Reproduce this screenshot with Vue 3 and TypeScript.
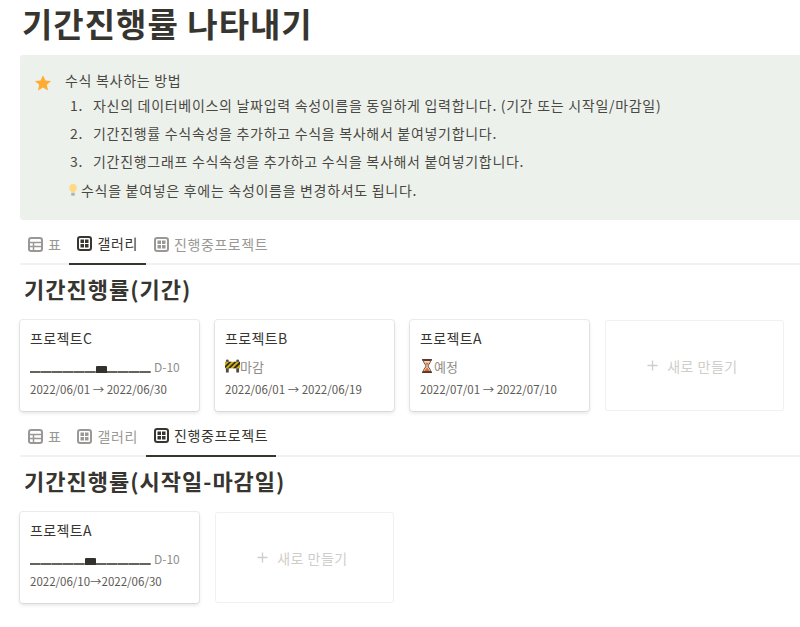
<script setup lang="ts">
interface Card {
  name: string
  kind: 'bar' | 'closed' | 'planned'
  dates: string
  before?: number
  after?: number
}
interface Section {
  tabs: { label: string; icon: 'table' | 'gallery'; active: boolean }[]
  heading: string
  cards: Card[]
}
const sections: Section[] = [
  {
    tabs: [
      { label: '표', icon: 'table', active: false },
      { label: '갤러리', icon: 'gallery', active: true },
      { label: '진행중프로젝트', icon: 'gallery', active: false },
    ],
    heading: '기간진행률(기간)',
    cards: [
      { name: '프로젝트C', kind: 'bar', dates: '2022/06/01 → 2022/06/30', before: 66, after: 44 },
      { name: '프로젝트B', kind: 'closed', dates: '2022/06/01 → 2022/06/19' },
      { name: '프로젝트A', kind: 'planned', dates: '2022/07/01 → 2022/07/10' },
    ],
  },
  {
    tabs: [
      { label: '표', icon: 'table', active: false },
      { label: '갤러리', icon: 'gallery', active: false },
      { label: '진행중프로젝트', icon: 'gallery', active: true },
    ],
    heading: '기간진행률(시작일-마감일)',
    cards: [{ name: '프로젝트A', kind: 'bar', dates: '2022/06/10→2022/06/30', before: 55, after: 55 }],
  },
]
const steps = [
  '자신의 데이터베이스의 날짜입력 속성이름을 동일하게 입력합니다. (기간 또는 시작일/마감일)',
  '기간진행률 수식속성을 추가하고 수식을 복사해서 붙여넣기합니다.',
  '기간진행그래프 수식속성을 추가하고 수식을 복사해서 붙여넣기합니다.',
]
</script>

<template>
  <div class="page">
    <h1 class="title">기간진행률 나타내기</h1>
    <div class="callout">
      <svg class="star" viewBox="0 0 24 24"><path d="M12 1.500l3.200 7 7.600.8-5.700 5.100 1.600 7.500L12 18.100l-6.700 3.800 1.600-7.500L1.200 9.300l7.600-.8z" fill="#ffac33" /></svg>
      <div class="callout-body">
        <div class="callout-head">수식 복사하는 방법</div>
        <ol class="steps">
          <li v-for="s in steps" :key="s">{{ s }}</li>
        </ol>
        <div class="tip">
          <svg class="bulb" viewBox="0 0 12 16">
            <path d="M6 .5a4.800 4.800 0 0 0-3 8.500c.6.600.9 1.300 1 2h4c.1-.7.4-1.400 1-2a4.800 4.800 0 0 0-3-8.500z" fill="#ffd983" />
            <rect x="3.800" y="11.200" width="4.400" height="3.800" rx="1" fill="#a9b5c0" />
          </svg>
          <span>수식을 붙여넣은 후에는 속성이름을 변경하셔도 됩니다.</span>
        </div>
      </div>
    </div>

    <section v-for="sec in sections" :key="sec.heading" class="view">
      <div class="tabs">
        <div v-for="t in sec.tabs" :key="t.label" class="tab" :class="{ active: t.active }">
          <svg class="tab-icon" viewBox="0 0 15 15">
            <template v-if="t.icon === 'table'">
              <rect x="1" y="1" width="13" height="13" rx="2.200" fill="none" stroke="currentColor" stroke-width="2" />
              <path d="M1 5.500h13M1 9.500h13M5.500 5.500v8" stroke="currentColor" stroke-width="1.500" fill="none" />
            </template>
            <template v-else>
              <rect x="1" y="1" width="13" height="13" rx="2.200" fill="none" stroke="currentColor" stroke-width="2" />
              <rect x="3.500" y="3.500" width="3.500" height="3.500" fill="currentColor" />
              <rect x="8" y="3.500" width="3.500" height="3.500" fill="currentColor" />
              <rect x="3.500" y="8" width="3.500" height="3.500" fill="currentColor" />
              <rect x="8" y="8" width="3.500" height="3.500" fill="currentColor" />
            </template>
          </svg>
          <span>{{ t.label }}</span>
        </div>
      </div>
      <h2 class="heading">{{ sec.heading }}</h2>
      <div class="cards">
        <div v-for="c in sec.cards" :key="c.name" class="card">
          <div class="card-name">{{ c.name }}</div>
          <div class="status">
            <template v-if="c.kind === 'bar'">
              <span class="bar">
                <span class="line" :style="{ width: c.before + 'px' }"></span>
                <span class="mark"></span>
                <span class="line" :style="{ width: c.after + 'px' }"></span>
              </span>
              <span class="dday">D-10</span>
            </template>
            <template v-else-if="c.kind === 'closed'">
              <svg class="emoji" viewBox="0 0 16 14">
                <path d="M1 1.500a1.500 1.500 0 0 1 3 0V14H1zM12 1.500a1.500 1.500 0 0 1 3 0V14h-3z" fill="#4a4d4e" />
                <rect x="0" y="2.500" width="16" height="7" fill="#d0ad10" />
                <path d="M0 7l4.500-4.500H7L0 9.500zM3 9.500l7-7h2.500l-7 7zM8.500 9.500l7-7H16v2.500l-4.500 4.500z" fill="#2b2c25" />
              </svg>
              <span class="state">마감</span>
            </template>
            <template v-else>
              <svg class="emoji glass" viewBox="0 0 10 14">
                <path d="M1.500 1.500h7c0 3.300-2.500 4-2.500 5.500s2.500 2.200 2.500 5.500h-7c0-3.300 2.500-4 2.500-5.500S1.500 4.800 1.500 1.500z" fill="#f6dcc4" stroke="#6b4a3f" stroke-width="1" />
                <path d="M2.600 12c.3-2 2.400-2.800 2.400-4.500 0 1.700 2.100 2.500 2.400 4.500zM3 3.800h4L5 6.300z" fill="#e8692a" />
                <rect x="0" y="0" width="10" height="1.800" rx=".5" fill="#5a3a30" />
                <rect x="0" y="12.200" width="10" height="1.800" rx=".5" fill="#5a3a30" />
              </svg>
              <span class="state">예정</span>
            </template>
          </div>
          <div class="dates">{{ c.dates }}</div>
        </div>
        <div class="new-card">
          <svg class="plus" viewBox="0 0 12 12"><path d="M6 .5v11M.5 6h11" stroke="currentColor" stroke-width="1.500" /></svg>
          <span>새로 만들기</span>
        </div>
      </div>
    </section>
  </div>
</template>

<style>
html, body { background: #fff; overflow: hidden; }
</style>

<style scoped>
.page {
  width: 800px;
  height: 627px;
  overflow: hidden;
  box-sizing: border-box;
  font-family: "Noto Sans CJK KR", "Noto Sans", sans-serif;
  color: #37352f;
}
.title {
  margin: 0 0 0 22px;
  height: 55px;
  font-size: 33px;
  line-height: 46px;
  letter-spacing: 1px;
  font-weight: 700;
  white-space: nowrap;
}
.callout {
  margin-left: 20px;
  height: 165px;
  box-sizing: border-box;
  padding: 15px 0 0 14px;
  background: #edf1ec;
  border-radius: 3px 0 0 3px;
  display: flex;
  gap: 13px;
  font-size: 14px;
  letter-spacing: .7px;
  line-height: 20px;
  color: #4a4842;
}
.star { width: 18px; height: 18px; margin-top: 4px; flex: none; }
.callout-body { min-width: 0; }
.callout-head { height: 20px; }
.steps {
  margin: 5px 0 0;
  padding: 0 0 0 22px;
  display: flex;
  flex-direction: column;
  gap: 8px;
  white-space: nowrap;
}
.steps li { height: 20px; padding-left: 6px; }
.tip { display: flex; align-items: center; gap: 3px; margin-top: 9px; margin-left: 3px; white-space: nowrap; }
.bulb { width: 10px; height: 14px; flex: none; }
.view { margin-left: 20px; }
.view + .view { margin-top: 1px; }
.tabs {
  display: flex;
  align-items: flex-end;
  height: 45px;
  box-sizing: border-box;
  border-bottom: 2px solid #f1f1ef;
  font-size: 14px;
  letter-spacing: .6px;
}
.tab {
  display: flex;
  align-items: center;
  gap: 5px;
  height: 37px;
  margin-bottom: -2px;
  padding: 0 8px 5px;
  box-sizing: border-box;
  color: #9a9894;
}
.tab.active {
  color: #37352f;
  border-bottom: 2px solid #37352f;
}
.tab-icon { width: 15px; height: 15px; flex: none; }
.heading {
  margin: 0 0 0 4px;
  height: 55px;
  font-size: 22px;
  letter-spacing: 1px;
  line-height: 47px;
  font-weight: 700;
  white-space: nowrap;
}
.cards {
  display: flex;
  gap: 16px;
}
.card, .new-card {
  width: 179px;
  height: 91px;
  box-sizing: border-box;
  border-radius: 3px;
}
.card {
  padding: 8px 10px;
  background: #fff;
  box-shadow: 0 0 0 1px rgba(15, 15, 15, .07), 0 2px 4px rgba(15, 15, 15, .12);
}
.card-name { font-size: 14px; letter-spacing: .4px; line-height: 20px; height: 20px; }
.status {
  display: flex;
  align-items: center;
  height: 20px;
  margin-top: 8px;
  font-size: 12px;
}
.bar { display: flex; align-items: flex-end; height: 14px; width: 121px; }
.line {
  height: 2px;
  background: repeating-linear-gradient(90deg, #66635b 0 10px, #8f8c80 10px 11px);
}
.mark { width: 11px; height: 7px; background: #33312c; border-radius: 1px 1px 0 0; }
.dday { margin-left: 3px; color: #8f8d88; }
.state { color: #8f8d88; font-size: 13px; }
.emoji { width: 15px; height: 14px; flex: none; }
.glass { width: 10px; margin: 0 2px 0 2px; }
.dates {
  margin-top: 4px;
  font-size: 11.500px;
  line-height: 18px;
  color: #5c5a55;
  white-space: nowrap;
}
.new-card {
  display: flex;
  align-items: center;
  justify-content: center;
  gap: 9px;
  padding-right: 4px;
  box-shadow: inset 0 0 0 1px #f1f1ef;
  color: #cfcecb;
  font-size: 14px;
  letter-spacing: .5px;
}
.plus { width: 11px; height: 11px; flex: none; }
</style>
